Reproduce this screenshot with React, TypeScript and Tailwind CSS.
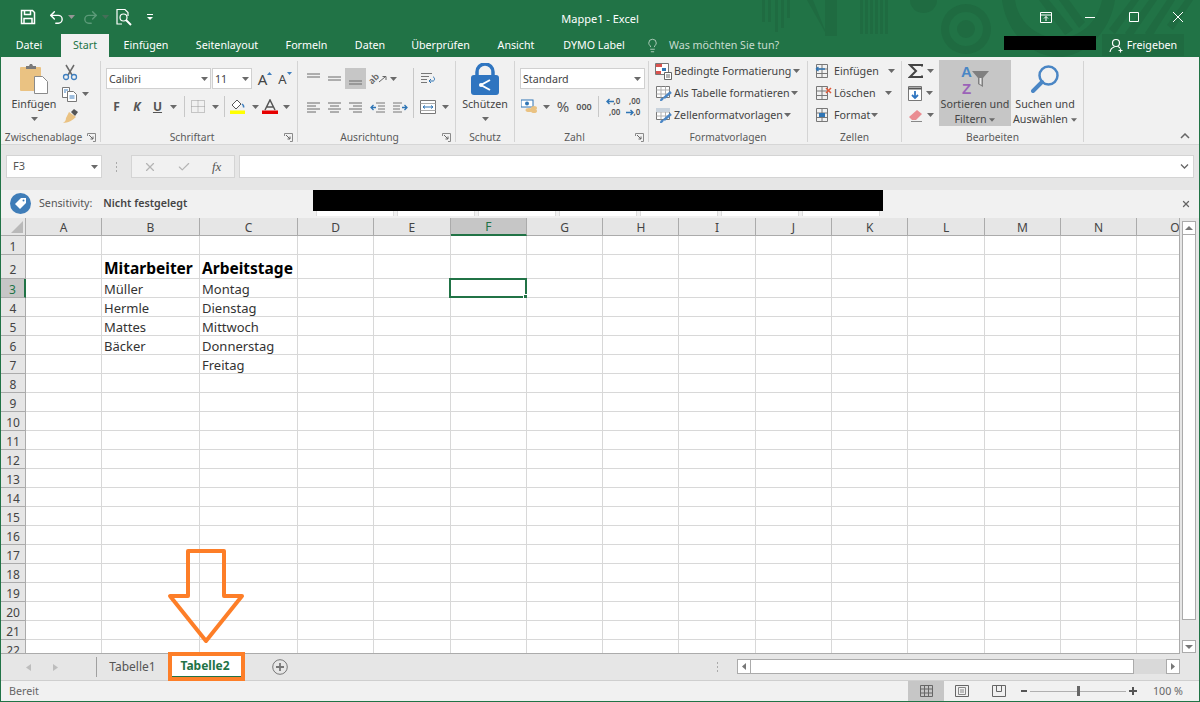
import React from 'react'
import { Undo2, Redo2, Lightbulb, X, Check } from 'lucide-react'

const tabs = [
  { label: 'Einfügen', w: 'w-[74px]' },
  { label: 'Seitenlayout', w: 'w-[88px]' },
  { label: 'Formeln', w: 'w-[71px]' },
  { label: 'Daten', w: 'w-[56px]' },
  { label: 'Überprüfen', w: 'w-[85px]' },
  { label: 'Ansicht', w: 'w-[66px]' },
  { label: 'DYMO Label', w: 'w-[90px]' },
]

const columns = ['A', 'B', 'C', 'D', 'E', 'F', 'G', 'H', 'I', 'J', 'K', 'L', 'M', 'N', 'O']
const rows = Array.from({ length: 22 }, (_, i) => i + 1)

const cells: Record<string, string> = {
  B2: 'Mitarbeiter',
  C2: 'Arbeitstage',
  B3: 'Müller',
  C3: 'Montag',
  B4: 'Hermle',
  C4: 'Dienstag',
  B5: 'Mattes',
  C5: 'Mittwoch',
  B6: 'Bäcker',
  C6: 'Donnerstag',
  C7: 'Freitag',
}

const Caret = ({ className = 'w-[8px]' }: { className?: string }) => (
  <span className={`flex items-center justify-center shrink-0 ${className}`}>
    <svg width="7" height="4" viewBox="0 0 7 4"><path d="M0 0h7L3.500 4z" fill="#6a6a6a" /></svg>
  </span>
)

const Launcher = () => (
  <svg width="9" height="9" viewBox="0 0 9 9" fill="none" stroke="#8a8a8a">
    <path d="M.5 3V.5h8v8H6" />
    <path d="M2 2l4 4M6 3.500V6H3.500" stroke="#666" />
  </svg>
)

const Group = ({ width, label, launcher, children }: { width: string; label: string; launcher?: boolean; children: React.ReactNode }) => (
  <div className={`${width} h-[81px] shrink-0 flex flex-col border-r border-[#d4d4d4]`}>
    <div className="h-[68px] flex">{children}</div>
    <div className={`h-[13px] pt-[4px] flex items-center relative text-[10.25px] text-[#5a5a5a] justify-center ${launcher ? 'pr-[14px]' : ''}`}>
      <span>{label}</span>
      {launcher && <span className="absolute right-[4px] top-[4px] flex"><Launcher /></span>}
    </div>
  </div>
)

const Big = ({ icon, lines, caret, width, active }: { icon: React.ReactNode; lines: string[]; caret?: boolean; width: string; active?: boolean }) => (
  <div className={`${width} h-[66px] -mt-px flex flex-col items-center shrink-0 text-[10.7px] leading-[15px] text-[#444] ${active ? 'bg-[#c6c6c6]' : ''}`}>
    <div className="h-[37px] shrink-0 flex items-center justify-center">{icon}</div>
    {lines.map((l, i) => (
      <div key={l} className="flex items-center whitespace-nowrap gap-[3px]">
        {l}
        {caret && i === lines.length - 1 && lines.length > 1 && <Caret className="w-[6px]" />}
      </div>
    ))}
    {caret && lines.length === 1 && <Caret className="h-[14px]" />}
  </div>
)

const Cell = ({ w, children, active }: { w: string; children?: React.ReactNode; active?: boolean }) => (
  <div className={`${w} h-[21px] shrink-0 flex items-center justify-center ${active ? 'bg-[#c6c6c6]' : ''}`}>{children}</div>
)

const Lines = ({ kind }: { kind: 'l' | 'c' | 'r' }) => {
  const x = kind === 'l' ? [[1, 14], [1, 10], [1, 14], [1, 10]] : kind === 'c' ? [[1, 14], [3, 12], [1, 14], [3, 12]] : [[1, 14], [5, 14], [1, 14], [5, 14]]
  return (
    <svg width="15" height="12" viewBox="0 0 15 12" stroke="#6a6a6a">
      {x.map((p, i) => <path key={i} d={`M${p[0]} ${2 + i * 3}H${p[1]}`} />)}
    </svg>
  )
}

const VAlign = ({ y }: { y: number }) => (
  <svg width="15" height="14" viewBox="0 0 15 14" stroke="#6a6a6a">
    <path d={`M1 ${y}H14M1 ${y + 3}H14`} />
  </svg>
)

const CellGrid = ({ children }: { children?: React.ReactNode }) => (
  <svg width="17" height="16" viewBox="0 0 17 16" fill="none">
    <path d="M1.500 1.500h11v13h-11zM1.500 6h11M1.500 10.500h11M7 1.500v13" stroke="#777" />
    {children}
  </svg>
)

const FormatIcon = ({ children }: { children: React.ReactNode }) => (
  <svg width="18" height="17" viewBox="0 0 18 17" fill="none">
    <path d="M1.500 1.500h13v11h-13z" fill="#fff" stroke="#777" />
    <path d="M1.500 5h13M1.500 9h13M6 1.500v11M10.500 1.500v11" stroke="#b0b0b0" />
    {children}
  </svg>
)

const Brush = () => (
  <>
    <path d="M16 7l-7 6" stroke="#4a86c5" strokeWidth="2.500" />
    <path d="M5 16c0-3 2-4 4-3l-1 2c-1 1-2 1-3 1z" fill="#4a86c5" />
  </>
)

const DecimalArrow = ({ right }: { right?: boolean }) => (
  <svg width="8" height="7" viewBox="0 0 8 7" fill="none" stroke="#2f75b5" strokeWidth="1.400">
    {right ? <path d="M0 3.500h7M4.500 1L7 3.500 4.500 6" /> : <path d="M8 3.500H1M3.500 1L1 3.500 3.500 6" />}
  </svg>
)

const StyleRow = ({ icon, text }: { icon: React.ReactNode; text: string }) => (
  <div className="h-[22px] flex items-center text-[10.7px] text-[#444] whitespace-nowrap">
    <span className="w-[19px] flex shrink-0">{icon}</span>
    <span>{text}</span>
    <Caret className="w-[10px]" />
  </div>
)

const TitleDecor = () => (
  <svg className="absolute right-0 top-0 pointer-events-none" width="440" height="57" viewBox="760 0 440 57" fill="#1f6b41">
    <path d="M763 0h3v22h-3zM769 0h3v22h-3zM776 0h3v32h-3zM782 0h3v28h-3zM788 0h3v18h-3z" />
    <path d="M808 0h6l12 30V0h12v36h-12v-4z" />
    <path d="M861 0h3v34h-3zM866 0h3v34h-3zM871 0h3v34h-3zM876 0h3v34h-3zM881 0h3v34h-3zM886 0h3v34h-3z" />
    <path d="M911 0h27a13.500 13 0 0 1-27 0z" />
    <path fillRule="evenodd" d="M967 4a25 25 0 1 1 0 50 25 25 0 0 1 0-50zm0 8a17 17 0 1 0 0 34 17 17 0 0 0 0-34zm0 8a9 9 0 1 1 0 18 9 9 0 0 1 0-18z" />
    <path d="M1003 0h13c3 22 22 38 43 38s39-14 44-38h13c-5 32-30 57-57 57s-52-25-56-57z" />
    <path d="M1040 0h10l24 30-8 5zM1060 0h10l16 22-6 6zM1132 0h8l-24 34-6-5zM1150 0h8l-26 38-6-5zM1168 0h8l-24 38-6-5zM1186 0h8l-20 30-6-5z" />
  </svg>
)

const App: React.FC = () => {
  return (
    <div className="relative w-[1200px] h-[702px] flex flex-col overflow-hidden border-x border-b border-[#217346] bg-[#f1f1f1] font-['Noto_Sans',sans-serif]">
      {/* Title bar */}
      <div className="relative h-[57px] shrink-0 bg-[#217346] text-white">
        <TitleDecor />
        <div className="relative h-[34px] grid grid-cols-[1fr_auto_1fr] items-center">
          <div className="flex items-center">
            <span className="w-[19px]" />
            <svg width="16" height="16" viewBox="0 0 16 16" fill="none" stroke="#fff" strokeWidth="1.500">
              <path d="M1.500 1.500h11l2 2v11h-13z" />
              <path d="M4.500 1.500v4h6v-4M4 14.500v-5h8v5" />
            </svg>
            <span className="w-[12px]" />
            <Undo2 size={17} strokeWidth={2} color="#fff" />
            <Caret className="w-[12px] invert" />
            <span className="w-[5px]" />
            <Redo2 size={17} strokeWidth={2} color="#5b9a78" />
            <Caret className="w-[12px] opacity-50" />
            <span className="w-[4px]" />
            <svg width="18" height="18" viewBox="0 0 18 18" fill="none" stroke="#fff" strokeWidth="1.200">
              <path d="M7 16H2V1.500h8l3 3V8" />
              <circle cx="8.500" cy="9.500" r="3.500" />
              <path d="M11 12l5 5" strokeWidth="2" />
            </svg>
            <span className="w-[13px]" />
            <svg width="8" height="8" viewBox="0 0 8 8" fill="#fff"><path d="M1 1h6v1H1zM1 4h6L4 7z" /></svg>
          </div>
          <div className="text-[11px] text-white pt-[4px]">Mappe1 - Excel</div>
          <div className="flex items-center justify-end pr-[15px] gap-[32px]">
            <svg width="12" height="11" viewBox="0 0 12 11" fill="none" stroke="#fff"><path d="M.5.500h11v10H.500zM.5 3h11" /><path d="M6 9V4.500M4 6.500l2-2 2 2" /></svg>
            <svg width="12" height="12" viewBox="0 0 12 12" stroke="#fff"><path d="M1 6.500h10" /></svg>
            <svg width="12" height="12" viewBox="0 0 12 12" fill="none" stroke="#fff"><path d="M1.500 1.500h9v9h-9z" /></svg>
            <svg width="12" height="12" viewBox="0 0 12 12" stroke="#fff"><path d="M1 1l10 10M11 1L1 11" /></svg>
          </div>
        </div>
        <div className="relative h-[23px] flex items-stretch text-[10.7px]">
          <div className="w-[56px] flex items-center justify-center">Datei</div>
          <div className="w-[48px] ml-[4px] bg-[#f1f1f1] text-[#217346] flex items-center justify-center">Start</div>
          {tabs.map((tab) => (
            <div key={tab.label} className={`${tab.w} flex items-center justify-center`}>{tab.label}</div>
          ))}
          <div className="ml-[6px] flex items-center gap-[9px] text-[#c7dccf]">
            <Lightbulb size={15} strokeWidth={1.300} />
            <span>Was möchten Sie tun?</span>
          </div>
          <div className="ml-auto flex items-start">
            <div className="w-[92px] h-[14px] mt-[2px] bg-black" />
            <div className="w-[82px] h-[22px] ml-[6px] mr-[15px] bg-[#1f6b41] flex items-center justify-center gap-[3px]">
              <svg width="15" height="15" viewBox="0 0 15 15" fill="none" stroke="#fff" strokeWidth="1.200">
                <circle cx="7" cy="5" r="3.500" />
                <path d="M1 14c.5-3 2-4.500 4.500-5M9 8.500c1 .5 1.500 1 2 1.500M11.500 10.500v4M9.500 12.500h4" />
              </svg>
              Freigeben
            </div>
          </div>
        </div>
      </div>

      {/* Ribbon */}
      <div className="h-[88px] shrink-0 pt-[4px] flex bg-[#f1f1f1] border-b border-[#d6d6d6] text-[#444]">
        <Group width="w-[100px]" label="Zwischenablage" launcher>
          <Big
            width="w-[66px]"
            caret
            lines={['Einfügen']}
            icon={
              <svg width="28" height="31" viewBox="0 0 28 31">
                <rect x="0" y="4" width="21" height="24" rx="1" fill="#eac282" />
                <path d="M6 6V3h3l1-2h2l1 2h3v3z" fill="#7a7a7a" />
                <path d="M14.500 13.500h8l5 5v12h-13z" fill="#fff" stroke="#8a8a8a" />
              </svg>
            }
          />
          <div className="-ml-[5px] flex flex-col items-start">
            <div className="h-[22px] flex items-center">
              <svg width="16" height="17" viewBox="0 0 16 17" fill="none">
                <path d="M4 1l6 10M12 1L6 11" stroke="#6a6a6a" strokeWidth="1.500" />
                <circle cx="4" cy="13" r="2.500" stroke="#3f7fbf" strokeWidth="1.300" />
                <circle cx="12" cy="13" r="2.500" stroke="#3f7fbf" strokeWidth="1.300" />
              </svg>
            </div>
            <div className="h-[22px] flex items-center">
              <svg width="16" height="15" viewBox="0 0 16 15" fill="none">
                <path d="M.5.500h7v10h-7z" fill="#fff" stroke="#777" />
                <path d="M5.500 4.500h6l3 3v7h-9z" fill="#fff" stroke="#777" />
                <path d="M2 3h4M2 5h2M7.500 9h5M7.500 11h5" stroke="#3f7fbf" />
              </svg>
              <Caret className="w-[14px]" />
            </div>
            <div className="h-[22px] flex items-center">
              <svg width="16" height="15" viewBox="0 0 16 15">
                <path d="M9 3l3-3 4 3-3 4z" fill="#555" />
                <path d="M7 3l7 5c-3 3-8 6-13 6 2-1 3-3 3-5z" fill="#eac282" />
              </svg>
            </div>
          </div>
        </Group>

        <Group width="w-[197px]" label="Schriftart" launcher>
          <div className="pl-[5px] pt-[7px] flex flex-col gap-[7px]">
            <div className="flex items-center text-[10.7px]">
              <div className="w-[105px] h-[21px] bg-white border border-[#d0d0d0] flex items-center pl-[2px]">
                <span className="flex-1 pt-[1px]">Calibri</span>
                <Caret className="w-[12px]" />
              </div>
              <div className="w-[40px] h-[21px] ml-[1px] bg-white border border-[#d0d0d0] flex items-center pl-[2px]">
                <span className="flex-1 pt-[1px]">11</span>
                <Caret className="w-[12px]" />
              </div>
              <span className="w-[20px] ml-[3px] flex items-start justify-center text-[15px] leading-[18px]">
                A
                <svg className="mt-[2px]" width="5" height="3" viewBox="0 0 5 3"><path d="M0 3h5L2.500 0z" fill="#3f7fbf" /></svg>
              </span>
              <span className="w-[20px] flex items-start justify-center text-[13px] leading-[18px] pt-[1px]">
                A
                <svg className="mt-[2px]" width="5" height="3" viewBox="0 0 5 3"><path d="M0 0h5L2.500 3z" fill="#3f7fbf" /></svg>
              </span>
            </div>
            <div className="flex items-center text-[12px] text-[#555]">
              <Cell w="w-[21px]"><b>F</b></Cell>
              <Cell w="w-[20px]"><b><i>K</i></b></Cell>
              <Cell w="w-[21px]"><b className="underline">U</b></Cell>
              <Caret className="w-[10px]" />
              <span className="w-[6px]" />
              <span className="w-px h-[21px] bg-[#c8c8c8]" />
              <Cell w="w-[26px]">
                <svg width="14" height="13" viewBox="0 0 14 13" fill="none" stroke="#999" strokeDasharray="1 1"><path d="M.5.500h13v12H.500zM7 .500v12M.500 6.500h13" /></svg>
              </Cell>
              <Caret className="w-[8px]" />
              <span className="w-[5px]" />
              <span className="w-px h-[21px] bg-[#c8c8c8]" />
              <Cell w="w-[26px]">
                <svg width="16" height="15" viewBox="0 0 16 15" fill="none">
                  <path d="M7 1L2 6l4 4 5-5z" stroke="#555" fill="#fff" />
                  <path d="M12 5c1.500 1 2 2 1.500 3.500" stroke="#3f7fbf" strokeWidth="1.500" />
                  <rect x="0" y="11.500" width="15" height="3.500" fill="#ffff00" />
                </svg>
              </Cell>
              <Caret className="w-[8px]" />
              <Cell w="w-[22px]">
                <svg width="16" height="15" viewBox="0 0 16 15" fill="none">
                  <path d="M3 11l5-10 5 10M5 8h6" stroke="#555" strokeWidth="1.500" />
                  <rect x="0" y="11.500" width="16" height="3.500" fill="#e60000" />
                </svg>
              </Cell>
              <Caret className="w-[10px]" />
            </div>
          </div>
        </Group>

        <Group width="w-[158px]" label="Ausrichtung" launcher>
          <div className="pl-[5px] pt-[7px] flex">
            <div className="w-[110px] flex flex-col gap-[7px]">
              <div className="flex items-center">
                <Cell w="w-[21px]"><VAlign y={2} /></Cell>
                <Cell w="w-[21px]"><VAlign y={5} /></Cell>
                <Cell w="w-[21px]" active><VAlign y={9} /></Cell>
                <Cell w="w-[23px]">
                  <span className="flex items-center text-[#666]">
                    <span className="text-[9px] leading-[9px] font-semibold -rotate-45">ab</span>
                    <svg width="8" height="8" viewBox="0 0 8 8" fill="none" stroke="#666"><path d="M0 7l6-5M3.500 1.500H7V5" /></svg>
                  </span>
                </Cell>
                <Caret className="w-[8px]" />
              </div>
              <div className="flex items-center">
                <Cell w="w-[21px]"><Lines kind="l" /></Cell>
                <Cell w="w-[21px]"><Lines kind="c" /></Cell>
                <Cell w="w-[21px]"><Lines kind="r" /></Cell>
                <Cell w="w-[23px]">
                  <svg width="16" height="12" viewBox="0 0 16 12" fill="none"><path d="M6 2h9M8 5h7M8 8h7M6 11h9" stroke="#777" /><path d="M1 6.500h5M3.500 4L1 6.500 3.500 9" stroke="#2f75b5" strokeWidth="1.300" /></svg>
                </Cell>
                <Cell w="w-[22px]">
                  <svg width="16" height="12" viewBox="0 0 16 12" fill="none"><path d="M1 2h9M1 5h7M1 8h7M1 11h9" stroke="#777" /><path d="M10 6.500h5M12.500 4L15 6.500 12.500 9" stroke="#2f75b5" strokeWidth="1.300" /></svg>
                </Cell>
              </div>
            </div>
            <span className="w-px h-[50px] bg-[#c8c8c8]" />
            <div className="flex flex-col gap-[7px]">
              <Cell w="w-[27px]">
                <svg width="16" height="14" viewBox="0 0 16 14" fill="none"><path d="M1 1.500h11M1 4.500h8M1 7.500h6M1 10.500h6" stroke="#777" /><path d="M9 9h4c2 0 2-4 0-4M9 9l2-2M9 9l2 2" stroke="#2f75b5" /></svg>
              </Cell>
              <div className="flex">
                <Cell w="w-[27px]">
                  <svg width="16" height="14" viewBox="0 0 16 14" fill="none"><path d="M.5.500h15v13H.500z" stroke="#777" fill="#fff" /><path d="M.5 3.500h15M.5 10.500h15" stroke="#aaa" /><path d="M3 7h10M3 7l2-1.500M3 7l2 1.500M13 7l-2-1.500M13 7l-2 1.500" stroke="#2f75b5" /></svg>
                </Cell>
                <Caret className="w-[8px]" />
              </div>
            </div>
          </div>
        </Group>

        <Group width="w-[59px]" label="Schutz">
          <Big
            width="w-[58px]"
            caret
            lines={['Schützen']}
            icon={
              <svg width="28" height="32" viewBox="0 0 28 32">
                <path d="M6 14V9a8 8 0 0 1 16 0v5" fill="none" stroke="#2f75c0" strokeWidth="3.500" />
                <rect x="0" y="12" width="28" height="20" rx="3" fill="#2f75c0" />
                <path d="M19 17l-9 5 9 5" fill="none" stroke="#fff" strokeWidth="2" />
                <circle cx="10" cy="22" r="2" fill="#fff" />
              </svg>
            }
          />
        </Group>

        <Group width="w-[134px]" label="Zahl" launcher>
          <div className="pl-[5px] pt-[7px] flex flex-col gap-[7px]">
            <div className="w-[125px] h-[21px] bg-white border border-[#d0d0d0] flex items-center pl-[2px] text-[10.7px]">
              <span className="flex-1 pt-[1px]">Standard</span>
              <Caret className="w-[14px]" />
            </div>
            <div className="flex items-center text-[#555]">
              <Cell w="w-[18px]">
                <svg width="16" height="15" viewBox="0 0 16 15"><rect x="0" y="1" width="12" height="7" fill="#fff" stroke="#2f75b5" /><circle cx="6" cy="4.500" r="2" fill="#2f75b5" /><ellipse cx="8" cy="11" rx="3.500" ry="2" fill="#eac282" /><ellipse cx="13" cy="9" rx="3" ry="2" fill="#eac282" /><ellipse cx="13" cy="12" rx="3" ry="2" fill="#eac282" /></svg>
              </Cell>
              <Caret className="w-[16px]" />
              <Cell w="w-[18px]"><span className="text-[15px]">%</span></Cell>
              <Cell w="w-[24px]"><span className="text-[9px] font-semibold">000</span></Cell>
              <span className="w-[2px]" />
              <span className="w-px h-[21px] bg-[#c8c8c8]" />
              <span className="w-[4px]" />
              <Cell w="w-[20px]">
                <span className="flex flex-col items-end gap-[3px] text-[8px] leading-[8px] font-semibold">
                  <span className="flex items-center"><DecimalArrow />,0</span>
                  <span>,00</span>
                </span>
              </Cell>
              <Cell w="w-[20px]">
                <span className="flex flex-col items-end gap-[3px] text-[8px] leading-[8px] font-semibold">
                  <span>,00</span>
                  <span className="flex items-center"><DecimalArrow right />,0</span>
                </span>
              </Cell>
            </div>
          </div>
        </Group>

        <Group width="w-[159px]" label="Formatvorlagen">
          <div className="pl-[6px] -mt-px flex flex-col">
            <StyleRow
              text="Bedingte Formatierung"
              icon={
                <svg width="18" height="17" viewBox="0 0 18 17">
                  <path d="M.5.500h13v11H.500z" fill="#fff" stroke="#777" />
                  <rect x="1" y="1" width="6" height="3" fill="#d9534f" />
                  <rect x="7" y="5" width="4" height="3" fill="#2f75b5" />
                  <rect x="1" y="8" width="5" height="3" fill="#d9534f" />
                  <path d="M9.500 9.500h7v7h-7z" fill="#fff" stroke="#666" />
                  <path d="M11 12h4M11 14h4" stroke="#666" />
                </svg>
              }
            />
            <StyleRow text="Als Tabelle formatieren" icon={<FormatIcon><Brush /></FormatIcon>} />
            <StyleRow text="Zellenformatvorlagen" icon={<FormatIcon><path d="M1 1h14v4H1z" fill="#c9d3dd" /><Brush /></FormatIcon>} />
          </div>
        </Group>

        <Group width="w-[94px]" label="Zellen">
          <div className="pl-[7px] -mt-px flex flex-col">
            <div className="h-[22px] flex items-center text-[10.7px]">
              <span className="w-[19px] flex"><CellGrid><path d="M1 6h9M1 6l2.500-2M1 6l2.500 2" stroke="#2f75b5" strokeWidth="1.300" /></CellGrid></span>
              <span className="w-[53px]">Einfügen</span>
              <Caret className="w-[8px]" />
            </div>
            <div className="h-[22px] flex items-center text-[10.7px]">
              <span className="w-[19px] flex"><CellGrid><path d="M11 3l5 5M16 3l-5 5" stroke="#e05a3a" strokeWidth="1.500" /></CellGrid></span>
              <span className="w-[50px]">Löschen</span>
              <Caret className="w-[8px]" />
            </div>
            <div className="h-[22px] flex items-center text-[10.7px]">
              <span className="w-[19px] flex"><CellGrid><rect x="4" y="6" width="6" height="4" fill="#2f75b5" /></CellGrid></span>
              <span>Format</span>
              <Caret className="w-[9px]" />
            </div>
          </div>
        </Group>

        <Group width="w-[182px]" label="Bearbeiten">
          <div className="w-[37px] pl-[6px] -mt-px flex flex-col shrink-0">
            <div className="h-[22px] flex items-center">
              <svg width="15" height="14" viewBox="0 0 15 14" fill="none" stroke="#444" strokeWidth="2"><path d="M14 2.500V1H2l6 6-6 6h12v-1.500" /></svg>
              <Caret className="w-[15px]" />
            </div>
            <div className="h-[22px] flex items-center">
              <svg width="14" height="15" viewBox="0 0 14 15" fill="none"><path d="M.5.500h13v14H.500z" fill="#fff" stroke="#777" /><path d="M.5 2.500h13" stroke="#555" strokeWidth="2" /><path d="M7 5v7M4 9l3 3 3-3" stroke="#2f75c0" strokeWidth="1.800" /></svg>
              <Caret className="w-[15px]" />
            </div>
            <div className="h-[22px] flex items-center">
              <svg width="15" height="13" viewBox="0 0 15 13"><path d="M9 1l5 4-6 6H4L1 8z" fill="#ea8d92" /><path d="M3 12.500h11" stroke="#888" /></svg>
              <Caret className="w-[14px]" />
            </div>
          </div>
          <Big
            width="w-[72px]"
            active
            caret
            lines={['Sortieren und', 'Filtern']}
            icon={
              <span className="flex items-center pt-[2px]">
                <span className="flex flex-col items-center text-[15px] leading-[17px] font-bold font-['Liberation_Sans',sans-serif]">
                  <span className="text-[#4a86c5]">A</span>
                  <span className="text-[#9b62b8]">Z</span>
                </span>
                <svg width="17" height="17" viewBox="0 0 17 17" className="mb-[3px]">
                  <path d="M0 1h17l-6 7v9l-5-3V8z" fill="#7f7f7f" />
                  <path d="M7.500 8h2v7l-2-1.200z" fill="#e8e8e8" />
                </svg>
              </span>
            }
          />
          <Big
            width="w-[68px]"
            caret
            lines={['Suchen und', 'Auswählen']}
            icon={
              <svg width="28" height="28" viewBox="0 0 28 28" fill="none" stroke="#4a86c5">
                <circle cx="17.500" cy="10.500" r="9" strokeWidth="2.500" />
                <path d="M11 17L2 26" strokeWidth="4" strokeLinecap="round" />
              </svg>
            }
          />
        </Group>

        <div className="flex-1 flex items-end justify-end pb-[5px] pr-[9px]">
          <svg width="10" height="6" viewBox="0 0 10 6" fill="none" stroke="#666" strokeWidth="1.500"><path d="M1 5l4-4 4 4" /></svg>
        </div>
      </div>

      {/* Formula bar */}
      <div className="h-[45px] shrink-0 bg-[#e6e6e6] pt-[10px] pl-[5px] pr-[5px] flex items-start text-[#555]">
        <div className="w-[96px] h-[23px] bg-white border border-[#d4d4d4] flex items-center pl-[6px] text-[11px]">
          <span className="flex-1">F3</span>
          <Caret className="w-[14px]" />
        </div>
        <div className="w-[29px] h-[23px] flex items-center justify-center">
          <svg width="3" height="10" viewBox="0 0 3 10" fill="#aaa"><path d="M1 0h1v2H1zM1 4h1v2H1zM1 8h1v2H1z" /></svg>
        </div>
        <div className="w-[104px] h-[23px] bg-[#f1f1f1] border border-[#d4d4d4] flex items-center">
          <span className="w-[34px] pl-[11px] flex"><X size={14} color="#b4b4b4" /></span>
          <span className="w-[34px] pl-[11px] flex"><Check size={14} color="#b4b4b4" /></span>
          <span className="pl-[12px] text-[13px] italic font-['Liberation_Serif',serif] text-[#555]">fx</span>
        </div>
        <div className="flex-1 h-[23px] ml-[4px] bg-white border border-[#d4d4d4] flex items-center justify-end pr-[4px]">
          <svg width="9" height="5" viewBox="0 0 9 5" fill="none" stroke="#666" strokeWidth="1.300"><path d="M1 .500l3.500 3.500L8 .500" /></svg>
        </div>
      </div>

      {/* Sensitivity bar */}
      <div className="h-[28px] shrink-0 bg-[#f1f1f1] flex items-start text-[10.7px] text-[#555]">
        <div className="w-[312px] h-[27px] flex items-center pl-[9px]">
          <svg width="21" height="21" viewBox="0 0 21 21">
            <circle cx="10.500" cy="10.500" r="10.500" fill="#3f7db8" />
            <path d="M5 11l6-6h5v5l-6 6z" fill="#fff" />
            <circle cx="13.500" cy="7.500" r="1" fill="#3f7db8" />
          </svg>
          <span className="ml-[8px]">Sensitivity:</span>
          <span className="ml-[11px] font-semibold text-[#444]">Nicht festgelegt</span>
        </div>
        <div className="w-[570px] flex flex-col">
          <div className="h-[21px] bg-black" />
          <div className="flex gap-[3px] pl-[3px] overflow-hidden">
            {[0, 1, 2, 3, 4, 5, 6].map((i) => (
              <div key={i} className="w-[78px] h-[5px] shrink-0 bg-white border-x border-[#dcdcdc]" />
            ))}
          </div>
        </div>
        <div className="flex-1 h-[27px] flex items-center justify-end pr-[8px]">
          <X size={10} strokeWidth={3} color="#666" />
        </div>
      </div>

      {/* Sheet */}
      <div className="h-[436px] shrink-0 flex bg-[#e6e6e6]">
        <div className="w-[1179px] overflow-hidden bg-white border-r border-b border-[#ababab] grid grid-cols-[25px_76px_98px_98px_repeat(12,76.3px)] content-start">
          <div className="h-[18px] bg-[#e6e6e6] border-b border-r border-[#ababab] flex items-end justify-end p-[2px]">
            <svg width="12" height="12" viewBox="0 0 12 12"><path d="M12 0v12H0z" fill="#b9b9b9" /></svg>
          </div>
          {columns.map((c) => (
            <div
              key={c}
              className={`h-[18px] pt-[2px] flex items-center justify-center text-[12px] border-r text-[#444] ${c === 'F' ? 'bg-[#c6c6c6] border-b-2 border-b-[#217346] border-r-[#ababab] text-[#217346]' : 'bg-[#e6e6e6] border-b border-[#ababab]'}`}
            >
              {c}
            </div>
          ))}
          {rows.map((r) => (
            <React.Fragment key={r}>
              <div
                className={`${r === 2 ? 'h-[24px] pt-[6px]' : 'h-[19px] pt-[4px]'} flex items-center justify-center text-[12px] border-b ${r === 3 ? 'bg-[#c6c6c6] text-[#217346] border-r-2 border-r-[#217346] border-b-[#ababab]' : 'bg-[#e6e6e6] text-[#444] border-r border-[#ababab]'}`}
              >
                {r}
              </div>
              {columns.map((c) => {
                const value = cells[`${c}${r}`]
                return (
                  <div
                    key={c}
                    className={`relative ${r === 2 ? 'h-[24px]' : 'h-[19px]'} flex items-center whitespace-nowrap border-r border-b border-[#d8d8d8] ${r === 2 ? 'text-[15.5px] font-bold text-black pl-[2px] pt-[5px]' : 'text-[13px] text-[#333] pl-[2px] pt-[4px]'}`}
                  >
                    {value}
                    {c === 'F' && r === 3 && (
                      <div className="absolute -left-[2px] -top-px w-[78px] h-[20px] border-2 border-[#217346]">
                        <span className="absolute -right-[3px] -bottom-[3px] w-[5px] h-[5px] bg-[#217346] border border-white" />
                      </div>
                    )}
                  </div>
                )
              })}
            </React.Fragment>
          ))}
        </div>
        {/* Vertical scrollbar */}
        <div className="flex-1 flex flex-col items-center pt-[3px] pb-[1px] pr-[2px] pl-[1px]">
          <div className="w-[14px] h-[14px] bg-white border border-[#ababab] flex items-center justify-center">
            <svg width="8" height="4" viewBox="0 0 8 4"><path d="M0 4h8L4 0z" fill="#777" /></svg>
          </div>
          <div className="w-[14px] h-[385px] bg-white border-x border-b border-[#ababab]" />
          <div className="flex-1" />
          <div className="w-[14px] h-[13px] bg-white border border-[#ababab] flex items-center justify-center">
            <svg width="8" height="4" viewBox="0 0 8 4"><path d="M0 0h8L4 4z" fill="#777" /></svg>
          </div>
        </div>
      </div>

      {/* Sheet tabs */}
      <div className="h-[27px] shrink-0 bg-[#e6e6e6] border-b border-[#cfcfcf] flex items-start text-[12px] text-[#555]">
        <div className="w-[95px] h-[26px] flex items-center pl-[25px] gap-[22px]">
          <svg width="5" height="7" viewBox="0 0 5 7"><path d="M5 0v7L0 3.500z" fill="#bdbdbd" /></svg>
          <svg width="5" height="7" viewBox="0 0 5 7"><path d="M0 0v7l5-3.500z" fill="#bdbdbd" /></svg>
        </div>
        <span className="w-px h-[20px] mt-[3px] bg-[#a0a0a0]" />
        <div className="w-[71px] h-[26px] flex items-center justify-center">Tabelle1</div>
        <div className="w-[77px] h-[29px] -mt-[2px] relative z-10 bg-white border-[4px] border-[#fd7e28] flex items-center justify-center font-bold text-[#217346]">
          <span className="h-full pr-[3px] flex items-center border-b border-[#217346] w-full justify-center">Tabelle2</span>
        </div>
        <div className="w-[70px] h-[26px] flex items-center justify-center">
          <svg width="16" height="16" viewBox="0 0 16 16" fill="none" stroke="#777"><circle cx="8" cy="8" r="7.300" /><path d="M4 8h8M8 4v8" strokeWidth="1.800" /></svg>
        </div>
        <div className="w-[407px] h-[26px] flex items-center justify-end pr-[3px]">
          <svg width="3" height="10" viewBox="0 0 3 10" fill="#aaa"><path d="M1 0h1v2H1zM1 4h1v2H1zM1 8h1v2H1z" /></svg>
        </div>
        <div className="ml-[15px] mt-[5px] w-[443px] h-[16px] flex">
          <div className="w-[14px] h-[15px] bg-white border border-[#ababab] flex items-center justify-center">
            <svg width="4" height="7" viewBox="0 0 4 7"><path d="M4 0v7L0 3.500z" fill="#777" /></svg>
          </div>
          <div className="w-[383px] h-[15px] bg-white border-y border-r border-[#ababab]" />
          <div className="w-[32px] h-[15px] bg-[#d9d9d9]" />
          <div className="w-[14px] h-[15px] bg-white border border-[#ababab] flex items-center justify-center">
            <svg width="4" height="7" viewBox="0 0 4 7"><path d="M0 0v7l4-3.500z" fill="#777" /></svg>
          </div>
        </div>
      </div>

      {/* Status bar */}
      <div className="flex-1 bg-[#f1f1f1] flex items-center text-[10.7px] text-[#666] pl-[8px]">
        <span>Bereit</span>
        <div className="ml-auto flex items-center h-full pr-[18px]">
          <div className="w-[36px] h-full bg-[#c6c6c6] flex items-center justify-center">
            <svg width="13" height="12" viewBox="0 0 13 12" fill="none" stroke="#666"><path d="M.5.500h12v11H.500zM.5 4h12M.5 8h12M4.500.500v11M8.500.500v11" /></svg>
          </div>
          <div className="w-[36px] h-full flex items-center justify-center">
            <svg width="14" height="12" viewBox="0 0 14 12" fill="none" stroke="#666"><path d="M.5.500h13v11H.500z" /><path d="M3.500 2.500h7v7h-7zM5 5h4M5 7h4" stroke="#888" /></svg>
          </div>
          <div className="w-[37px] h-full flex items-center justify-center">
            <svg width="14" height="12" viewBox="0 0 14 12" fill="none" stroke="#666"><path d="M.5.500h13v11H.500zM4.500.500v6h5v-6" /></svg>
          </div>
          <svg className="ml-[4px]" width="6" height="2" viewBox="0 0 6 2" fill="#555"><path d="M0 0h6v2H0z" /></svg>
          <div className="relative w-[96px] h-[13px] mx-[3px] flex items-center justify-center">
            <div className="w-full h-px bg-[#b0b0b0]" />
            <span className="absolute left-[47px] w-[3px] h-[10px] bg-[#666]" />
          </div>
          <svg width="8" height="8" viewBox="0 0 8 8" fill="#555"><path d="M3 0h2v3h3v2H5v3H3V5H0V3h3z" /></svg>
          <span className="ml-[16px] w-[28px] whitespace-nowrap">100 %</span>
        </div>
      </div>

      {/* Annotation arrow */}
      <svg className="absolute -left-px top-0 pointer-events-none" width="1200" height="702" viewBox="0 0 1200 702" fill="none">
        <path d="M188 551h36v45h18l-36 45-36-45h18z" stroke="#fd7e28" strokeWidth="4" strokeLinejoin="round" />
      </svg>
    </div>
  )
}

export default App
